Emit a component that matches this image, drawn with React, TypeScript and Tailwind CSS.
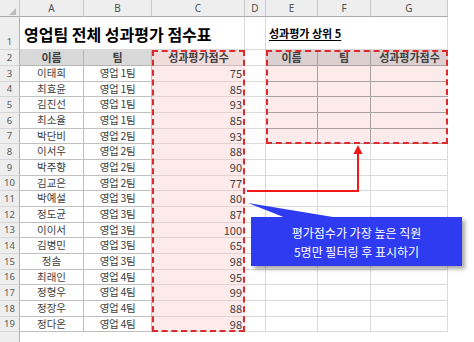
import React from "react";

const names = ["이태희","최효윤","김진선","최소율","박단비","이서우","박주향","김교은","박예설","정도균","이이서","김병민","정솜","최래인","정형우","정장우","정다온"];
const teams = ["영업 1팀","영업 1팀","영업 1팀","영업 1팀","영업 2팀","영업 2팀","영업 2팀","영업 2팀","영업 3팀","영업 3팀","영업 3팀","영업 3팀","영업 3팀","영업 4팀","영업 4팀","영업 4팀","영업 4팀"];
const scores = [75,85,93,85,93,88,90,77,80,87,100,65,98,95,99,88,98];

const font = "font-['Noto_Sans_CJK_KR','Noto_Sans',sans-serif]";

function RowLabel({ n, bottom }: { n: string; bottom?: boolean }) {
  return (
    <div className={`bg-[#eeeeee] border-r border-b border-r-[#b0b0b0] border-b-[#d6d6d6] flex justify-center text-[9.5px] text-[#5a5a5a] font-['Noto_Sans',sans-serif] leading-none ${bottom ? "items-end pb-[3px]" : "items-center"}`}>
      {n}
    </div>
  );
}

export default function App() {
  const cols = ["A", "B", "C", "D", "E", "F", "G"];
  return (
    <div className={`relative w-[474px] h-[342px] overflow-hidden bg-white ${font}`}>
      <div className="grid grid-cols-[20px_64px_68px_93px_21px_52px_53px_77px_1fr] grid-rows-[17px_33px_16px_16px_15px_16px_16px_15px_16px_16px_15px_16px_16px_15px_16px_16px_15px_16px_16px_15px_10px] w-[474px] h-[342px]">
        {/* C column block */}
        <div className="col-start-4 row-start-3 row-span-18 grid grid-rows-subgrid outline-2 outline-dashed outline-[#dc2a2e] -outline-offset-2 z-10">
          <div className="bg-[#f1dcdc] border-b border-[#cdbcbc] flex items-center justify-center text-[11px] font-bold text-[#404040]">성과평가점수</div>
          {scores.map((s, i) => (
            <div key={i} className="bg-[#fdeaea] border-b border-[#e3d2d2] flex items-center justify-end pr-[3px] text-[11px] text-[#404040] leading-none">{s}</div>
          ))}
        </div>
        {/* E-G block */}
        <div className="col-start-6 col-span-3 row-start-3 row-span-6 grid grid-cols-subgrid grid-rows-subgrid outline-2 outline-dashed outline-[#dc2a2e] -outline-offset-2 z-10">
          <div className="bg-[#dbcfcf] border-r border-b border-[#a8a0a0] flex items-center justify-center text-[11px] font-bold text-[#404040]">이름</div>
          <div className="bg-[#dbcfcf] border-r border-b border-[#a8a0a0] flex items-center justify-center text-[11px] font-bold text-[#404040]">팀</div>
          <div className="bg-[#dbcfcf] border-b border-[#a8a0a0] flex items-center justify-center text-[11px] font-bold text-[#404040]">성과평가점수</div>
          {Array.from({ length: 5 }).map((_, i) => (
            <React.Fragment key={i}>
              <div className="bg-[#fdeaea] border-r border-b border-[#aaa2a2]" />
              <div className="bg-[#fdeaea] border-r border-b border-[#aaa2a2]" />
              <div className="bg-[#fdeaea] border-b border-[#aaa2a2]" />
            </React.Fragment>
          ))}
        </div>

        {/* column header row */}
        <div className="bg-[#eeeeee] border-r border-b border-r-[#c8c8c8] border-b-[#ababab] relative">
          <svg width="20" height="17" className="absolute inset-0">
            <polygon points="9,15 16,15 16,8" fill="#bdbdbd" />
          </svg>
        </div>
        {cols.map((c) => (
          <div key={c} className="bg-[#eeeeee] border-r border-b border-r-[#c8c8c8] border-b-[#ababab] flex items-center justify-center text-[10px] text-[#505050] font-['Noto_Sans',sans-serif] leading-none">{c}</div>
        ))}
        <div className="bg-white" />

        {/* row 1 */}
        <RowLabel n="1" bottom />
        <div className="col-span-3 border-r border-b border-[#dadada] flex items-center pl-[4px] pt-[1px] text-[16px] font-bold text-black whitespace-nowrap leading-none">영업팀 전체 성과평가 점수표</div>
        <div className="border-r border-b border-[#dadada]" />
        <div className="col-span-3 border-r border-b border-[#dadada] flex items-center pl-[3px] text-[11px] font-bold text-black whitespace-nowrap leading-none">
          <span className="underline underline-offset-2">성과평가 상위 5</span>
        </div>
        <div className="bg-white" />

        {/* rows 2..19 */}
        <RowLabel n="2" />
        <div className="bg-[#d9d9d9] border-r border-b border-[#b5b5b5] flex items-center justify-center text-[11px] font-bold text-[#404040]">이름</div>
        <div className="bg-[#d9d9d9] border-r border-b border-[#b5b5b5] flex items-center justify-center text-[11px] font-bold text-[#404040]">팀</div>
        <div className="border-r border-b border-[#dadada]" />
        <div className="bg-white" />
        {names.map((nm, i) => {
          const r = i + 3;
          return (
            <React.Fragment key={r}>
              <RowLabel n={String(r)} />
              <div className="border-r border-b border-[#c0c0c0] flex items-center justify-center text-[10.5px] text-[#404040] leading-none">{nm}</div>
              <div className="border-r border-b border-[#c0c0c0] flex items-center justify-center text-[10.5px] text-[#404040] leading-none tracking-[-0.3px]">{teams[i]}</div>
              <div className="border-r border-b border-[#dadada]" />
              {r >= 8 && (
                <>
                  <div className="border-r border-b border-[#dadada]" />
                  <div className="border-r border-b border-[#dadada]" />
                  <div className="border-r border-b border-[#dadada]" />
                </>
              )}
              <div className="bg-white" />
            </React.Fragment>
          );
        })}
        {/* bottom filler */}
        <div className="bg-[#eeeeee] border-r border-[#b0b0b0]" />
        <div className="col-span-8 bg-white" />
      </div>

      {/* arrow and callout pointer */}
      <svg width="474" height="342" className="absolute inset-0 pointer-events-none z-20">
        <polyline points="247,191 358,191 358,153" fill="none" stroke="#f01818" strokeWidth="2" />
        <polygon points="358,145 353.5,154 362.5,154" fill="#f01818" />
        <polygon points="248,203 286,218 339,218" fill="#2e3bf0" />
      </svg>
      <div className="absolute left-[251px] top-[217px] w-[211px] h-[49px] bg-[#2e3bf0] shadow-[3px_3px_4px_rgba(0,0,0,0.35)] z-20 flex flex-col items-center justify-center text-white text-[12px] leading-[19px]">
        <div>평가점수가 가장 높은 직원</div>
        <div>5명만 필터링 후 표시하기</div>
      </div>
    </div>
  );
}
